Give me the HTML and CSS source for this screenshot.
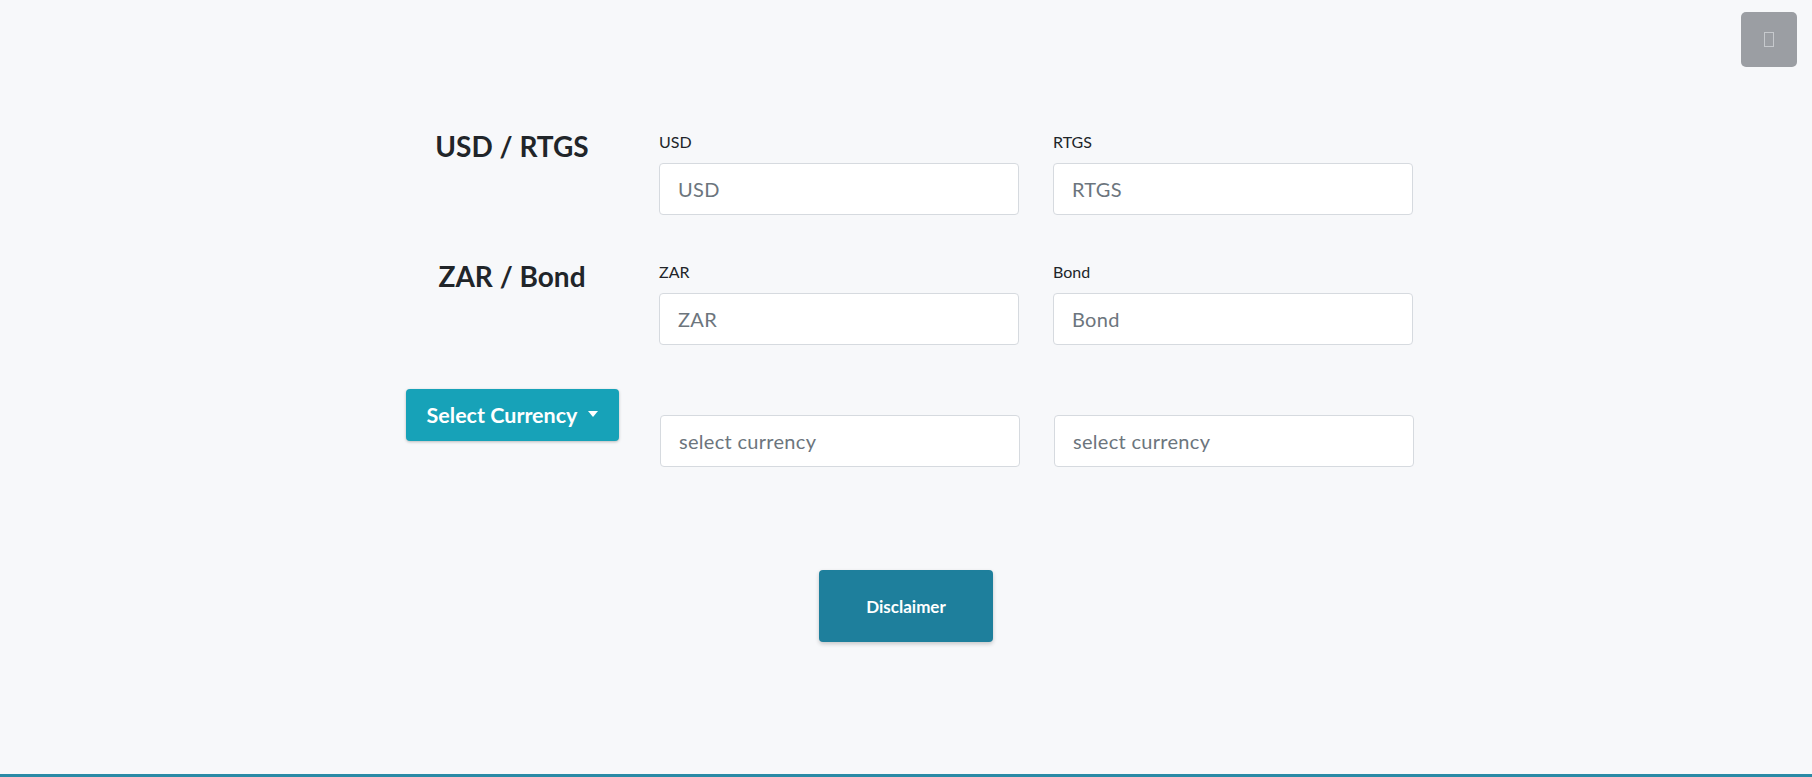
FILE: index.html
```html
<!DOCTYPE html>
<html>
  <head>
    <meta charset="utf-8">
    <title>Currency Converter</title>
    <link rel="stylesheet" href="styles.css">
  </head>
  <body>
    <div class="page">
      <header class="topbar">
        <button class="menuBtn" type="button"><span class="tofu"></span></button>
      </header>

      <main class="converter">
        <div class="pair">
          <div class="pairTitle"><h3>USD / RTGS</h3></div>
          <div class="fields">
            <div class="field">
              <label for="usd">USD</label>
              <input type="text" id="usd" placeholder="USD">
            </div>
            <div class="field">
              <label for="rtgs">RTGS</label>
              <input type="text" id="rtgs" placeholder="RTGS">
            </div>
          </div>
        </div>

        <div class="pair">
          <div class="pairTitle"><h3>ZAR / Bond</h3></div>
          <div class="fields">
            <div class="field">
              <label for="zar">ZAR</label>
              <input type="text" id="zar" placeholder="ZAR">
            </div>
            <div class="field">
              <label for="bond">Bond</label>
              <input type="text" id="bond" placeholder="Bond">
            </div>
          </div>
        </div>

        <div class="pair">
          <div class="pairTitle">
            <button class="btnSelect" type="button">Select Currency <span class="caret"></span></button>
          </div>
          <div class="fields noLabel">
            <div class="field"><input type="text" placeholder="select currency"></div>
            <div class="field"><input type="text" placeholder="select currency"></div>
          </div>
        </div>
      </main>

      <div class="actions">
        <button class="btnDisclaimer" type="button">Disclaimer</button>
      </div>
    </div>
  </body>
</html>
```

FILE: styles.css
```css
body{
	margin: 0;
	padding: 0;
	background-color: #f7f8fa;
	font-family: "Lato", "Open Sans", sans-serif;
	color: #212529;
}

.page{
	min-height: 100vh;
	box-sizing: border-box;
	border-bottom: 3px solid #2a8aa6;
}

.topbar{
	display: flex;
	justify-content: flex-end;
	padding: 12px 15px 0 0;
}

.menuBtn{
	width: 56px;
	height: 55px;
	border: none;
	border-radius: 5px;
	background-color: #9b9ea3;
	display: flex;
	align-items: center;
	justify-content: center;
	padding: 0;
}

.tofu{
	width: 8px;
	height: 13px;
	border: 1px solid #c6c9cd;
}

.converter{
	width: 1007px;
	padding-left: 7px;
	margin: 62px auto 0 auto;
}

.pair{
	display: flex;
	margin-bottom: 44px;
}

.pair:last-child{
	margin-bottom: 0;
}

.pairTitle{
	width: 213px;
	margin-right: 41px;
	text-align: center;
}

.pairTitle h3{
	margin: 0;
	padding-top: 1px;
	font-size: 28px;
	line-height: 1.2;
	font-weight: 700;
}

.fields{
	display: grid;
	grid-template-columns: 360px 360px;
	column-gap: 34px;
}

.fields.noLabel{
	padding-top: 26px;
}

.field label{
	display: block;
	font-size: 16px;
	line-height: 26px;
	margin-bottom: 8px;
}

.field input{
	display: block;
	width: 100%;
	height: 52px;
	box-sizing: border-box;
	padding: 0 18px;
	border: 1px solid #d6dadf;
	border-radius: 4px;
	background-color: #fff;
	font-family: inherit;
	font-size: 20px;
	letter-spacing: 0.3px;
	color: #495057;
}

.field input::placeholder{
	color: #6c757d;
}

.btnSelect{
	width: 213px;
	height: 52px;
	border: none;
	border-radius: 4px;
	background-color: #17a2b8;
	color: #fff;
	font-family: inherit;
	font-size: 21.5px;
	font-weight: 700;
	display: flex;
	align-items: center;
	justify-content: center;
	gap: 11px;
	box-shadow: 0 1px 3px rgba(0, 0, 0, 0.25);
}

.caret{
	width: 0;
	height: 0;
	border-top: 6px solid #fff;
	border-left: 5.5px solid transparent;
	border-right: 5.5px solid transparent;
	margin-top: -3px;
}

.actions{
	display: flex;
	justify-content: center;
	margin-top: 103px;
}

.btnDisclaimer{
	width: 174px;
	height: 72px;
	border: none;
	border-radius: 4px;
	background-color: #1e7f9c;
	color: #fff;
	font-family: inherit;
	font-size: 17px;
	font-weight: 700;
	box-shadow: 0 2px 4px rgba(0, 0, 0, 0.2);
}
```
